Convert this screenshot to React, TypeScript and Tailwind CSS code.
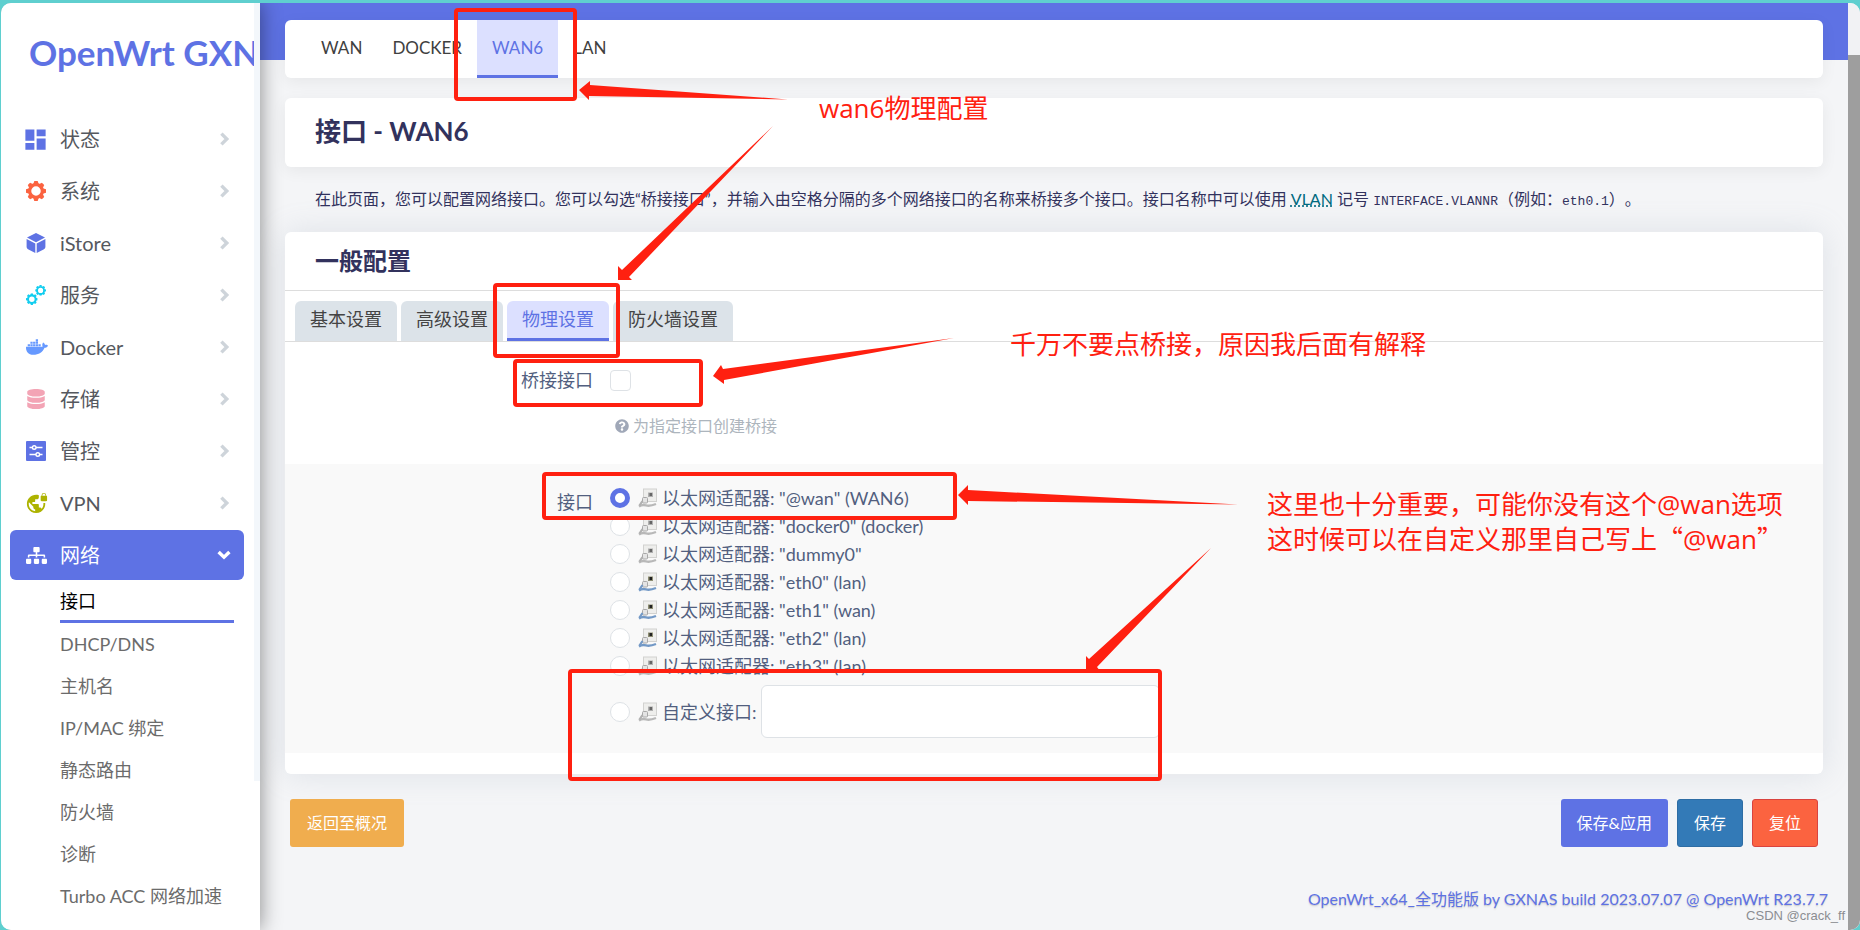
import type { ReactNode } from 'react';
import { FaDatabase, FaDocker, FaQuestionCircle, FaSitemap } from 'react-icons/fa';
import { MdDashboard, MdVpnLock } from 'react-icons/md';

function GearIcon({ className, x = 0, y = 0, size = 24 }: { className?: string; x?: number; y?: number; size?: number }) {
  const teeth = [0, 45, 90, 135, 180, 225, 270, 315];
  return (
    <svg x={x} y={y} width={size} height={size} viewBox="0 0 24 24" className={className}>
      <circle cx="12" cy="12" r="7.6" fill="none" stroke="currentColor" strokeWidth="3.8" />
      {teeth.map(a => (
        <path key={a} d="M8.6 4 L10 0 H14 L15.4 4 Z" fill="currentColor" transform={`rotate(${a} 12 12)`} />
      ))}
    </svg>
  );
}

function GearsIcon() {
  return (
    <svg width="20" height="20" viewBox="0 0 24 24">
      <GearIcon x={0} y={10} size={14} />
      <GearIcon x={11} y={0} size={13} />
    </svg>
  );
}

function CubeIcon() {
  return (
    <svg width="20" height="20" viewBox="0 0 20 20" fill="currentColor">
      <path d="M10 0 L19 4.6 L10 9.2 L1 4.6 Z" />
      <path d="M.6 6 L9.3 10.4 V20 L2 16.2 Q.6 15.5 .6 14 Z" />
      <path d="M19.4 6 L10.7 10.4 V20 L18 16.2 Q19.4 15.5 19.4 14 Z" />
    </svg>
  );
}

function SlidersIcon() {
  return (
    <svg width="20" height="20" viewBox="0 0 20 20">
      <rect width="20" height="20" rx="1" fill="currentColor" />
      <g stroke="#fff" strokeWidth="1.4" fill="none">
        <path d="M3.5 6.5 H6.5 M10 6.5 H16.5 M3.5 13.5 H10 M13.5 13.5 H16.5" />
        <circle cx="8.2" cy="6.5" r="1.8" />
        <circle cx="11.8" cy="13.5" r="1.8" />
      </g>
    </svg>
  );
}

function Chevron({ open }: { open?: boolean }) {
  return (
    <svg width="14" height="14" viewBox="0 0 14 14" fill="none" stroke="currentColor" strokeWidth="3.4">
      <path d={open ? 'M1.6 4 L7 9.2 L12.4 4' : 'M4.4 1.6 L9.8 7 L4.4 12.4'} />
    </svg>
  );
}

function EthernetIcon({ up }: { up?: boolean }) {
  return (
    <svg width="20" height="20" viewBox="0 0 20 20" className="shrink-0">
      <path d="M1 18.4 Q4 16.4 8 17.4 T18 16" fill="none" stroke={up ? '#7399c6' : '#b8b8b8'} strokeWidth="2.4" />
      <rect x="5.5" y="1" width="13" height="12.5" fill="#eeeeec" stroke="#d2d2d0" />
      <rect x="10" y="4.5" width="5" height="4.5" fill={up ? '#8d8d72' : '#b0b0b0'} />
      <rect x="11.5" y="5" width="2.5" height="3" fill={up ? '#222' : '#666'} />
      <rect x="4.5" y="9.5" width="5" height="5.5" rx="1" fill="#e4e4e4" stroke="#a8a8a8" />
      <path d="M4.5 13 L1.5 17.5" stroke={up ? '#7399c6' : '#b0b0b0'} strokeWidth="2.2" />
    </svg>
  );
}

const menu: { name: string; color: string; icon: ReactNode }[] = [
  { name: '状态', color: 'text-[#5e72e4]', icon: <MdDashboard size={27} className="-m-1" /> },
  { name: '系统', color: 'text-[#fb6340]', icon: <GearIcon size={20} /> },
  { name: 'iStore', color: 'text-[#5e72e4]', icon: <CubeIcon /> },
  { name: '服务', color: 'text-[#11cdef]', icon: <GearsIcon /> },
  { name: 'Docker', color: 'text-[#6699ff]', icon: <FaDocker size={22} /> },
  { name: '存储', color: 'text-[#f3a4b5]', icon: <FaDatabase size={20} /> },
  { name: '管控', color: 'text-[#5e72e4]', icon: <SlidersIcon /> },
  { name: 'VPN', color: 'text-[#adb300]', icon: <MdVpnLock size={22} /> },
];

const subMenu = ['DHCP/DNS', '主机名', 'IP/MAC 绑定', '静态路由', '防火墙', '诊断', 'Turbo ACC 网络加速'];

const interfaces = [
  { name: '"@wan" (WAN6)', up: false },
  { name: '"docker0" (docker)', up: false },
  { name: '"dummy0"', up: false },
  { name: '"eth0" (lan)', up: true },
  { name: '"eth1" (wan)', up: true },
  { name: '"eth2" (lan)', up: true },
  { name: '"eth3" (lan)', up: false },
];

const radio =
  'size-5 shrink-0 appearance-none rounded-full border border-[#dee2e6] bg-white checked:border-[5px] checked:border-[#5e72e4]';

function Sidebar() {
  return (
    <aside className="relative z-10 flex w-[259px] shrink-0 bg-white shadow-[0_0_20px_rgba(0,0,0,0.45)]">
      <div className="min-w-0 flex-1">
        <a href="#" className="block whitespace-nowrap pt-[25px] pl-7 text-[35px] leading-[48px] font-bold text-[#5e72e4]">
          OpenWrt GXN
        </a>
        <nav className="mt-[38px] ml-[9px] w-[234px]">
          <ul className="flex flex-col gap-0.5">
            {menu.map(item => (
              <li key={item.name}>
                <a href="#" className="flex h-[50px] items-center pr-[13px] pl-4 text-xl">
                  <span className={`flex w-[34px] items-center ${item.color}`}>{item.icon}</span>
                  <span className="flex-1 text-[#55585e]">{item.name}</span>
                  <span className="text-[#ced4da]">
                    <Chevron />
                  </span>
                </a>
              </li>
            ))}
            <li>
              <a href="#" className="flex h-[50px] items-center rounded-md bg-[#5e72e4] pr-[13px] pl-4 text-xl text-white">
                <FaSitemap size={21} />
                <span className="flex-1 pl-[13px]">网络</span>
                <Chevron open />
              </a>
            </li>
          </ul>
          <ul className="mt-px mr-2.5 ml-[50px] text-lg text-[#6b6b6b]">
            <li>
              <a href="#" className="flex h-[42px] items-center border-b-3 border-[#5e72e4] text-black">
                接口
              </a>
            </li>
            {subMenu.map(name => (
              <li key={name}>
                <a href="#" className="flex h-[42px] items-center whitespace-nowrap">
                  {name}
                </a>
              </li>
            ))}
          </ul>
        </nav>
      </div>
      <div className="mb-[149px] w-1.5 bg-[#f3f7fb]" />
    </aside>
  );
}

function Settings() {
  return (
    <section className="mt-[17px] rounded-md bg-white pb-[21px] shadow-[0_0_32px_rgba(136,152,170,0.2)]">
      <h3 className="h-[58px] pl-[30px] text-2xl leading-[58px] font-bold text-[#32325d]">一般配置</h3>
      <div className="flex gap-1 border-y border-[#dddddd] px-2.5 pt-2.5 text-lg leading-[36px] text-[#444]">
        {['基本设置', '高级设置', '物理设置', '防火墙设置'].map(tab => (
          <button
            key={tab}
            className={`h-10 rounded-t-md px-[15px] pb-1 ${
              tab === '物理设置' ? 'border-b-3 border-[#5e72e4] bg-[#dce0ff] text-[#5e72e4]' : 'bg-[#dce3e9]'
            }`}
          >
            {tab}
          </button>
        ))}
      </div>
      <div className="h-[122px] pt-6 text-lg text-[#525f7f]">
        <div className="flex items-center">
          <label htmlFor="bridge" className="w-[308px] text-right">
            桥接接口
          </label>
          <input id="bridge" type="checkbox" className="ml-[17px] size-[21px] appearance-none rounded border border-[#dee2e6] bg-white" />
        </div>
        <p className="mt-5 ml-[330px] flex items-center gap-1 text-base text-[#adb5bd]">
          <FaQuestionCircle size={14} className="text-[#a0a8b8]" />
          为指定接口创建桥接
        </p>
      </div>
      <fieldset className="flex h-[289px] bg-[#f9f9f9] pt-5 text-lg text-[#525f7f]">
        <span className="mt-1 w-[308px] text-right leading-7">接口</span>
        <div className="ml-[17px]">
          {interfaces.map((item, i) => (
            <label key={item.name} className="flex h-7 items-center">
              <input type="radio" name="iface" defaultChecked={i === 0} className={radio} />
              <span className="ml-2 flex items-center gap-1 whitespace-pre">
                <EthernetIcon up={item.up} />
                以太网适配器: {item.name}
              </span>
            </label>
          ))}
          <div className="mt-[5px] flex items-center">
            <input id="custom" type="radio" name="iface" className={radio} />
            <label htmlFor="custom" className="ml-2 flex items-center gap-1">
              <EthernetIcon />
              自定义接口:
            </label>
            <input type="text" aria-label="自定义接口" className="ml-1 h-[53px] w-[399px] rounded-md border border-[#dee2e6] bg-white px-3" />
          </div>
        </div>
      </fieldset>
    </section>
  );
}

// red marker drawings laid over the page
function Notes() {
  return (
    <div className="pointer-events-none absolute inset-0 z-20 font-['Open_Sans','Noto_Sans_CJK_SC',sans-serif] text-[26px] leading-[34px] whitespace-nowrap text-[#ff2010]">
      <svg width="1860" height="930" className="absolute top-0 left-0">
        <g fill="none" stroke="#ff2010" strokeWidth="4">
          <rect x="456" y="10" width="119" height="89" rx="2" />
          <rect x="495" y="285" width="123" height="71" rx="2" />
          <rect x="515" y="361" width="186" height="44" rx="2" />
          <rect x="544" y="474" width="411" height="44" rx="2" />
          <rect x="570" y="671" width="590" height="108" rx="2" />
        </g>
        <g fill="#ff2010">
          <path d="M579 90 L590 81 V85 L788 99.5 L589 96 V100 Z" />
          <path d="M618 280 V266 L622 270 L773 126 L629 277 L632 280 Z" />
          <path d="M713 376 L721 365 L723 369 L954 338 L724 380 V384 Z" />
          <path d="M958 495 L968 485 V490 L1238 504.5 L968 501 V505 Z" />
          <path d="M1086 671 V656 L1089 659 L1211 548 L1097 667 L1100 671 Z" />
        </g>
      </svg>
      <p className="absolute top-[91px] left-[819px]">wan6物理配置</p>
      <p className="absolute top-[327px] left-[1010px]">千万不要点桥接，原因我后面有解释</p>
      <p className="absolute top-[487px] left-[1267px]">
        这里也十分重要，可能你没有这个@wan选项
        <br />
        这时候可以在自定义那里自己写上
        <span className="font-['Noto_Sans_CJK_SC',sans-serif]">“</span>@wan
        <span className="font-['Noto_Sans_CJK_SC',sans-serif]">”</span>
      </p>
    </div>
  );
}

export default function App() {
  return (
    <div
      lang="zh-CN"
      className="relative min-h-screen overflow-hidden bg-[#5fcfcf] pt-[3px] pl-px font-['Lato','Noto_Sans_CJK_SC',sans-serif]"
    >
      <div className="flex min-h-[927px] overflow-hidden rounded-[10px] bg-[#f4f5f7]">
        <Sidebar />
        <div className="flex min-w-0 flex-1 flex-col bg-[linear-gradient(#5e72e4_57px,#f4f5f7_57px)]">
          <main className="px-[25px] pt-[17px]">
            <nav className="flex h-[58px] rounded-md bg-white pl-5 text-[17px] leading-[56px] text-[#404040] shadow-[0_4px_16px_rgba(0,0,0,0.06)]">
              {['WAN', 'DOCKER', 'WAN6', 'LAN'].map(tab => (
                <a
                  key={tab}
                  href="#"
                  className={`px-[15px] first:pl-4 ${tab === 'WAN6' ? 'border-b-3 border-[#5e72e4] bg-[#dce0ff] text-[#5e72e4]' : ''}`}
                >
                  {tab}
                </a>
              ))}
            </nav>
            <h2 className="mt-5 h-[69px] rounded-md bg-white pl-[30px] text-[26px] leading-[66px] font-bold text-[#32325d] shadow-[0_4px_16px_rgba(0,0,0,0.06)]">
              接口 - WAN6
            </h2>
            <p className="mt-[18px] pl-[30px] text-base leading-[27px] text-[#32325d] [text-spacing-trim:space-all]">
              在此页面，您可以配置网络接口。您可以勾选“桥接接口”，并输入由空格分隔的多个网络接口的名称来桥接多个接口。接口名称中可以使用{' '}
              <abbr title="Virtual Local Area Network" className="text-[#006a80] underline decoration-dotted">
                VLAN
              </abbr>{' '}
              记号 <code className="font-['Liberation_Mono',monospace] text-[13px]">INTERFACE.VLANNR</code>（例如：
              <code className="font-['Liberation_Mono',monospace] text-[13px]">eth0.1</code>）。
            </p>
            <Settings />
            <div className="mt-[25px] flex items-center gap-[9px] px-[5px] text-base text-white">
              <button className="mr-auto h-12 rounded-[3px] bg-[#f0ad4e] px-[17px]">返回至概况</button>
              <button className="h-12 rounded-[3px] bg-[#5e72e4] px-4">保存&应用</button>
              <button className="h-12 rounded-[3px] border border-[#2e6da4] bg-[#337ab7] px-4">保存</button>
              <button className="h-12 rounded-[3px] border border-[#d9433f] bg-[#fb6340] px-4">复位</button>
            </div>
          </main>
          <footer className="mt-10 pr-5 text-right text-base text-[#5e72e4]">
            <a href="#" className="text-shadow-sm">
              OpenWrt_x64_全功能版 by GXNAS build 2023.07.07 @ OpenWrt R23.7.7
            </a>
          </footer>
        </div>
        <div className="w-3 shrink-0 bg-[#f1f2f4] pt-[52px]">
          <div className="h-full bg-[#9e9e9e]" />
        </div>
      </div>
      <span className="absolute right-[15px] bottom-1 z-20 font-['Liberation_Sans',sans-serif] text-[13px] leading-5 text-[#8b8d92]">
        CSDN @crack_ff
      </span>
      <Notes />
    </div>
  );
}
